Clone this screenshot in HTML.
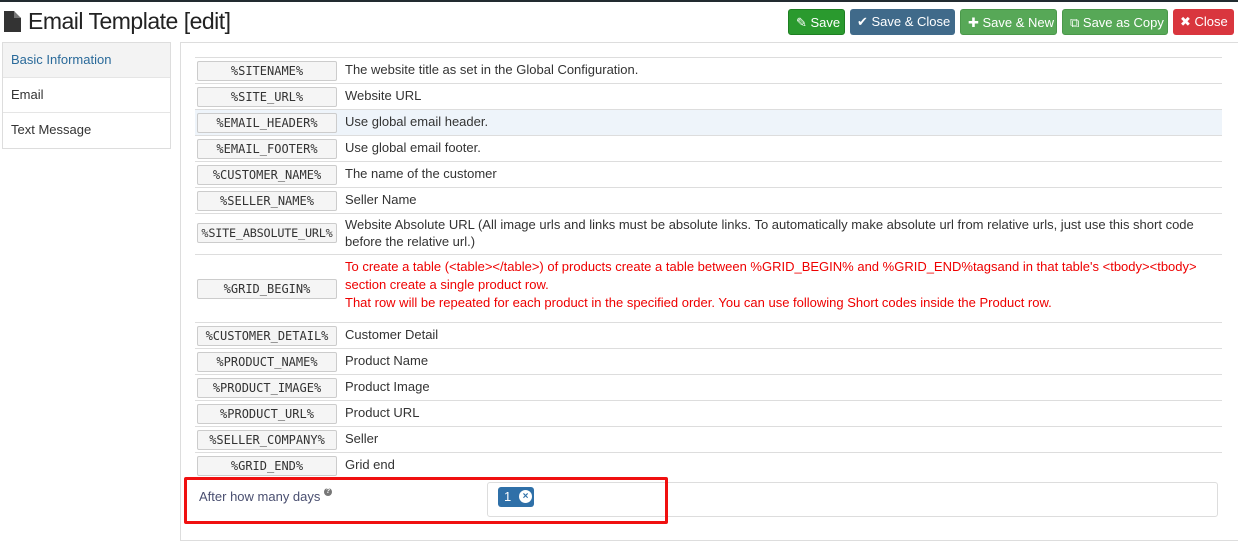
<!DOCTYPE html>
<html><head><style>
*{box-sizing:border-box;margin:0;padding:0}
body{width:1238px;height:556px;background:#fff;font-family:"Liberation Sans",sans-serif;font-size:13px;color:#333;position:relative;overflow:hidden}
.topbar{position:absolute;left:0;top:0;width:1238px;height:2px;background:#222b30}
h1{position:absolute;left:28px;top:8px;font-size:23px;font-weight:normal;color:#222;letter-spacing:-0.5px}
.doc{position:absolute;left:4px;top:11px}
.btn{position:absolute;top:9px;height:26px;border-radius:3px;color:#fff;font-size:13px;line-height:25px;padding-left:7px;white-space:nowrap}
.side{position:absolute;left:2px;top:42px;width:169px;height:107px;border:1px solid #ddd}
.side div{height:35px;line-height:34px;padding-left:8px;border-bottom:1px solid #e5e5e5}
.main{position:absolute;left:180px;top:42px;width:1058px;height:499px;border:1px solid #ddd;border-right:none}
.row{position:absolute;left:195px;width:1027px;border-top:1px solid #ddd}
.code{position:absolute;left:2px;width:140px;height:20px;background:#f5f5f5;border:1px solid #ccc;border-radius:2px;font-family:"DejaVu Sans Mono","Liberation Mono",monospace;font-size:12px;text-align:center;line-height:18px;color:#333;white-space:nowrap;overflow:hidden}
.txt{position:absolute;left:150px;line-height:17px}
.red{color:#e00}
</style></head><body>
<div class="topbar"></div>
<svg class="doc" width="17" height="21" viewBox="0 0 17 21"><path d="M0 0H10L17 7V21H0Z" fill="#333"/><path d="M11 0V6H17Z" fill="#fff"/><path d="M10 0L17 7H10Z" fill="#777"/></svg>
<h1>Email Template [edit]</h1>
<div class="btn" style="left:788px;width:57px;background:#2a9a2e;border:1px solid #1e7f22">&#9998; Save</div>
<div class="btn" style="left:850px;width:105px;background:#406a8a">&#10004; Save &amp; Close</div>
<div class="btn" style="left:960px;width:97px;background:#57a857;border:1px solid #4a984a">&#10010; Save &amp; New</div>
<div class="btn" style="left:1062px;width:106px;background:#57a857;border:1px solid #4a984a">&#10697; Save as Copy</div>
<div class="btn" style="left:1173px;width:61px;background:#d9363e">&#10006; Close</div>
<div class="side"><div style="background:#f3f3f3;color:#2a6a9a">Basic Information</div><div>Email</div><div style="border-bottom:none">Text Message</div></div>
<div class="main"></div>

<div class="row" style="top:57px;height:26px"><div class="code" style="top:3px">%SITENAME%</div><div class="txt" style="top:3px">The website title as set in the Global Configuration.</div></div>
<div class="row" style="top:83px;height:26px"><div class="code" style="top:3px">%SITE_URL%</div><div class="txt" style="top:3px">Website URL</div></div>
<div class="row" style="top:109px;height:26px;background:#eef4fa"><div class="code" style="top:3px">%EMAIL_HEADER%</div><div class="txt" style="top:3px">Use global email header.</div></div>
<div class="row" style="top:135px;height:26px"><div class="code" style="top:3px">%EMAIL_FOOTER%</div><div class="txt" style="top:3px">Use global email footer.</div></div>
<div class="row" style="top:161px;height:26px"><div class="code" style="top:3px">%CUSTOMER_NAME%</div><div class="txt" style="top:3px">The name of the customer</div></div>
<div class="row" style="top:187px;height:26px"><div class="code" style="top:3px">%SELLER_NAME%</div><div class="txt" style="top:3px">Seller Name</div></div>
<div class="row" style="top:213px;height:41px"><div class="code" style="top:9px;font-size:11.8px;letter-spacing:-0.2px">%SITE_ABSOLUTE_URL%</div><div class="txt" style="top:2px">Website Absolute URL (All image urls and links must be absolute links. To automatically make absolute url from relative urls, just use this short code<br>before the relative url.)</div></div>
<div class="row" style="top:254px;height:68px"><div class="code" style="top:24px">%GRID_BEGIN%</div><div class="txt red" style="top:3px;line-height:18px">To create a table (&lt;table&gt;&lt;/table&gt;) of products create a table between %GRID_BEGIN% and %GRID_END%tagsand in that table's &lt;tbody&gt;&lt;tbody&gt;<br>section create a single product row.<br>That row will be repeated for each product in the specified order. You can use following Short codes inside the Product row.</div></div>
<div class="row" style="top:322px;height:26px"><div class="code" style="top:3px">%CUSTOMER_DETAIL%</div><div class="txt" style="top:3px">Customer Detail</div></div>
<div class="row" style="top:348px;height:26px"><div class="code" style="top:3px">%PRODUCT_NAME%</div><div class="txt" style="top:3px">Product Name</div></div>
<div class="row" style="top:374px;height:26px"><div class="code" style="top:3px">%PRODUCT_IMAGE%</div><div class="txt" style="top:3px">Product Image</div></div>
<div class="row" style="top:400px;height:26px"><div class="code" style="top:3px">%PRODUCT_URL%</div><div class="txt" style="top:3px">Product URL</div></div>
<div class="row" style="top:426px;height:26px"><div class="code" style="top:3px">%SELLER_COMPANY%</div><div class="txt" style="top:3px">Seller</div></div>
<div class="row" style="top:452px;height:26px"><div class="code" style="top:3px">%GRID_END%</div><div class="txt" style="top:3px">Grid end</div></div>

<div style="position:absolute;left:487px;top:482px;width:731px;height:35px;border:1px solid #ddd;border-radius:3px"></div>
<div style="position:absolute;left:498px;top:487px;width:36px;height:20px;background:#2f70a8;border-radius:3px;color:#fff;font-size:13px;line-height:20px;padding-left:6px">1<span style="position:absolute;left:21px;top:3px;width:13px;height:13px;border-radius:50%;background:#fff;color:#2f70a8;font-size:10px;line-height:13px;text-align:center;font-weight:bold">&#215;</span></div>
<div style="position:absolute;left:199px;top:489px;color:#4a4f70">After how many days</div>
<div style="position:absolute;left:324px;top:488px;width:8px;height:8px;border-radius:50%;background:#777;color:#fff;font-size:7px;line-height:8px;text-align:center;font-weight:bold">?</div>
<div style="position:absolute;left:184px;top:477px;width:484px;height:47px;border:3px solid #f01010;border-radius:2px"></div>
</body></html>
